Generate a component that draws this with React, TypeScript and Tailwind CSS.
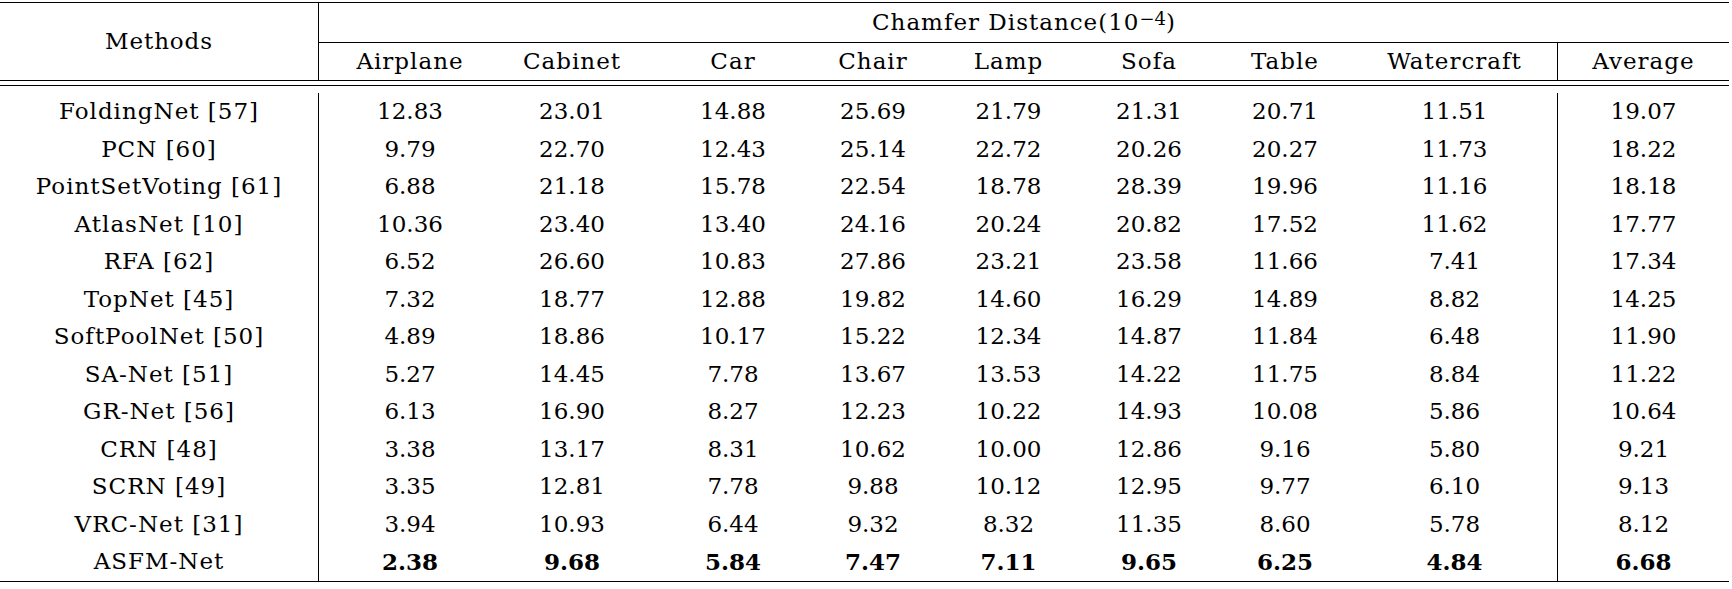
const cols = "grid grid-cols-[319px_182px_142px_180px_100px_171px_110px_162px_191px_172px]";

const categories = ["Airplane", "Cabinet", "Car", "Chair", "Lamp", "Sofa", "Table"];

const rows: [string, string[]][] = [
  ["FoldingNet [57]", ["12.83", "23.01", "14.88", "25.69", "21.79", "21.31", "20.71", "11.51", "19.07"]],
  ["PCN [60]", ["9.79", "22.70", "12.43", "25.14", "22.72", "20.26", "20.27", "11.73", "18.22"]],
  ["PointSetVoting [61]", ["6.88", "21.18", "15.78", "22.54", "18.78", "28.39", "19.96", "11.16", "18.18"]],
  ["AtlasNet [10]", ["10.36", "23.40", "13.40", "24.16", "20.24", "20.82", "17.52", "11.62", "17.77"]],
  ["RFA [62]", ["6.52", "26.60", "10.83", "27.86", "23.21", "23.58", "11.66", "7.41", "17.34"]],
  ["TopNet [45]", ["7.32", "18.77", "12.88", "19.82", "14.60", "16.29", "14.89", "8.82", "14.25"]],
  ["SoftPoolNet [50]", ["4.89", "18.86", "10.17", "15.22", "12.34", "14.87", "11.84", "6.48", "11.90"]],
  ["SA-Net [51]", ["5.27", "14.45", "7.78", "13.67", "13.53", "14.22", "11.75", "8.84", "11.22"]],
  ["GR-Net [56]", ["6.13", "16.90", "8.27", "12.23", "10.22", "14.93", "10.08", "5.86", "10.64"]],
  ["CRN [48]", ["3.38", "13.17", "8.31", "10.62", "10.00", "12.86", "9.16", "5.80", "9.21"]],
  ["SCRN [49]", ["3.35", "12.81", "7.78", "9.88", "10.12", "12.95", "9.77", "6.10", "9.13"]],
  ["VRC-Net [31]", ["3.94", "10.93", "6.44", "9.32", "8.32", "11.35", "8.60", "5.78", "8.12"]],
  ["ASFM-Net", ["2.38", "9.68", "5.84", "7.47", "7.11", "9.65", "6.25", "4.84", "6.68"]],
];

function Cell({ children, className = "" }: { children: React.ReactNode; className?: string }) {
  return <div className={`flex items-center justify-center ${className}`}>{children}</div>;
}

export default function App() {
  return (
    <div className="w-[1732px] h-[589px] bg-white text-black font-['DejaVu_Serif',serif] text-[23px] leading-none pt-[2px]">
      <div className="w-[1729px] border-t border-black">
        {/* header */}
        <div className={cols}>
          <Cell className="row-span-2 border-r border-black tracking-[0.9px]">Methods</Cell>
          <Cell className="col-span-9 h-[40px] border-b border-black tracking-[1px]">
            Chamfer Distance(10<sup className="text-[18px] relative -top-[4px] tracking-normal">−4</sup>)
          </Cell>
          {categories.map((c) => (
            <Cell key={c} className="h-[37px] tracking-[1px]">{c}</Cell>
          ))}
          <Cell className="h-[37px] pr-[14px] tracking-[1px]">Watercraft</Cell>
          <Cell className="h-[37px] border-l border-black tracking-[1px]">Average</Cell>
        </div>

        <div className="h-[6px] border-y border-black" />

        {/* body */}
        <div className="border-b border-black">
          {rows.map(([name, vals], i) => {
            const best = i === rows.length - 1;
            return (
              <div key={name} className={`${cols} ${i === 0 ? "h-[44.5px] pt-[7px]" : "h-[37.5px]"}`}>
                <Cell className="border-r border-black tracking-[1px]">{name}</Cell>
                {vals.map((v, j) => (
                  <Cell
                    key={j}
                    className={`${j === 7 ? "pr-[14px]" : ""} ${j === 8 ? "border-l border-black" : ""} ${best ? "font-bold" : ""}`}
                  >
                    {v}
                  </Cell>
                ))}
              </div>
            );
          })}
        </div>
      </div>
    </div>
  );
}
